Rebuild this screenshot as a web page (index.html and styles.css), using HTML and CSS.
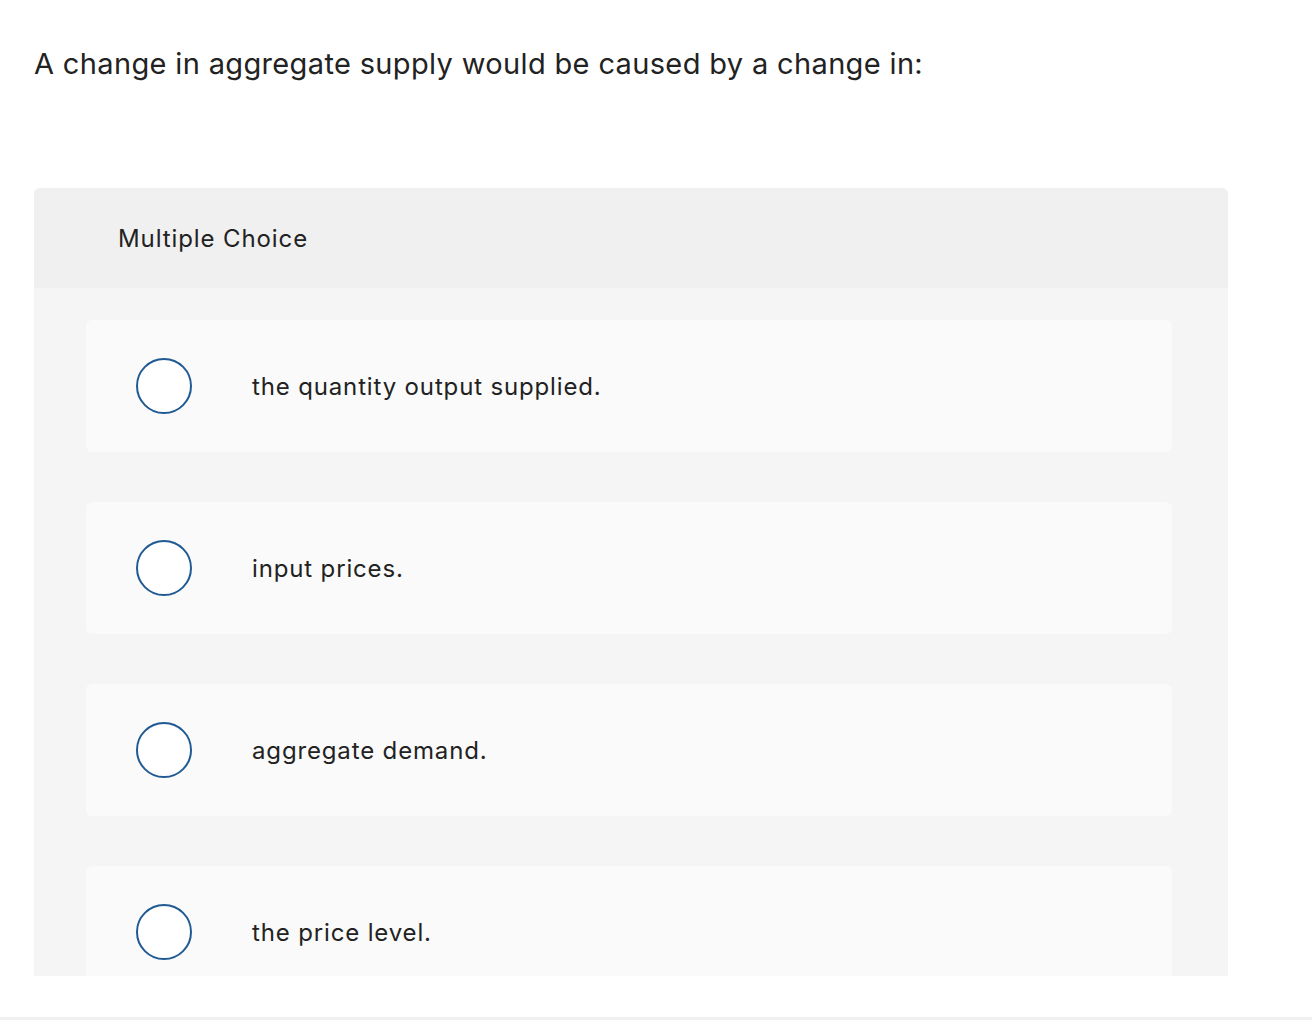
FILE: index.html
```html
<!DOCTYPE html>
<html>
<head>
<meta charset="utf-8">
<link rel="stylesheet" href="styles.css">
</head>
<body>
<div class="page">
  <p class="question">A change in aggregate supply would be caused by a change in:</p>
  <div class="card">
    <div class="card-head">Multiple Choice</div>
    <div class="card-body">
      <div class="option"><span class="radio"></span><span class="label">the quantity output supplied.</span></div>
      <div class="option"><span class="radio"></span><span class="label">input prices.</span></div>
      <div class="option"><span class="radio"></span><span class="label">aggregate demand.</span></div>
      <div class="option"><span class="radio"></span><span class="label">the price level.</span></div>
    </div>
  </div>
</div>
<div class="footer-line"></div>
</body>
</html>
```

FILE: styles.css
```css
html, body { margin: 0; padding: 0; background: #fff; }
body { font-family: "Inter", "Noto Sans", sans-serif; color: #222; }
.page { height: 1017px; padding: 0 0 0 34px; box-sizing: border-box; overflow: hidden; }
.question { margin: 0; padding-top: 44px; font-size: 29px; line-height: 40px; letter-spacing: 0.35px; color: #222; }
.card { margin-top: 104px; width: 1194px; height: 788px; overflow: hidden; border-radius: 6px 6px 0 0; background: #f5f5f5; }
.card-head { height: 100px; background: #f0f0f0; padding-left: 84px; display: flex; align-items: center; font-size: 24px; letter-spacing: 0.9px; color: #222; }
.card-body { padding: 32px 56px 0 52px; display: flex; flex-direction: column; gap: 50px; }
.option { height: 132px; background: #fafafa; border-radius: 6px; display: flex; align-items: center; padding-left: 50px; }
.radio { width: 52px; height: 52px; border: 2px solid #205a93; border-radius: 50%; background: #fff; flex: none; }
.label { margin-left: 60px; font-size: 24px; letter-spacing: 0.85px; color: #222; }
.footer-line { height: 3px; background: #f0f0f0; }
```
